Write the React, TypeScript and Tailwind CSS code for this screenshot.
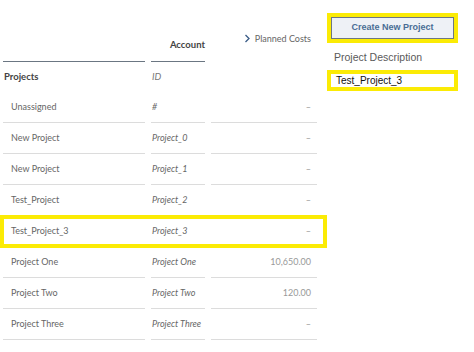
import React from 'react';

type Row = { name: string; id: string; cost: string; highlight?: boolean };

const rows: Row[] = [
  { name: 'Unassigned', id: '#', cost: '–' },
  { name: 'New Project', id: 'Project_0', cost: '–' },
  { name: 'New Project', id: 'Project_1', cost: '–' },
  { name: 'Test_Project', id: 'Project_2', cost: '–' },
  { name: 'Test_Project_3', id: 'Project_3', cost: '–', highlight: true },
  { name: 'Project One', id: 'Project One', cost: '10,650.00' },
  { name: 'Project Two', id: 'Project Two', cost: '120.00' },
  { name: 'Project Three', id: 'Project Three', cost: '–' },
];

const cols = 'grid grid-cols-[142px_54px_106px] gap-x-[6px] pl-[3px] pr-[10px]';

const App: React.FC = () => {
  return (
    <div className="flex w-[474px] h-[352px] bg-white overflow-hidden font-['Lato',sans-serif]">
      <div className="w-[327px] shrink-0 flex flex-col">
        {/* header */}
        <div className={`${cols} h-[62px]`}>
          <div className="border-b border-[#6b7682]" />
          <div className="border-b border-[#6b7682] flex items-end justify-end pb-[9px] text-[9.5px] font-bold text-[#444]">
            Account
          </div>
          <div className="flex items-start justify-end pt-[32px] text-[9px] text-[#666] gap-[4px]">
            <svg width="7" height="9" viewBox="0 0 7 9" className="mt-[2px]">
              <path d="M1.5 1 L5 4.5 L1.5 8" fill="none" stroke="#3a5c86" strokeWidth="1.3" />
            </svg>
            <span className="mr-[6px]">Planned Costs</span>
          </div>
        </div>
        <div className={`${cols} h-[30px] items-center text-[9.5px]`}>
          <div className="font-bold text-[#444] pl-px">Projects</div>
          <div className="italic text-[#777] pl-px">ID</div>
          <div />
        </div>
        {rows.map((r, i) => (
          <div key={i} className="relative">
            <div className={`${cols} h-[31px] text-[9px]`}>
              <div className="border-b border-[#dcdcdc] flex items-center pl-[8px] text-[#666]">{r.name}</div>
              <div className="border-b border-[#dcdcdc] flex items-center pl-px italic text-[#666]">{r.id}</div>
              <div className="border-b border-[#dcdcdc] flex items-center justify-end pr-[6px] text-[#999]">{r.cost}</div>
            </div>
            {r.highlight && (
              <div className="absolute left-0 right-0 top-[-1px] bottom-[-1px] border-4 border-[#fbeb05] pointer-events-none" />
            )}
          </div>
        ))}
      </div>
      <div className="flex-1 flex flex-col pt-[13px] font-['Liberation_Sans',Arial,sans-serif]">
        <div className="w-[131px] h-[30px] border-4 border-[#fbeb05] flex">
          <div className="flex-1 bg-[#eef1f6] border border-[#6d7784] flex items-center justify-center text-[9px] font-bold text-[#4a6d95]">
            Create New Project
          </div>
        </div>
        <div className="mt-[7px] pl-[7px] text-[10.5px] text-[#5a5a5a]">Project Description</div>
        <div className="mt-[4px] w-[131px] h-[21px] border-4 border-[#fbeb05] bg-white flex items-center pl-[5px] text-[10px] text-[#111]">
          Test_Project_3
        </div>
      </div>
    </div>
  );
};

export default App;
